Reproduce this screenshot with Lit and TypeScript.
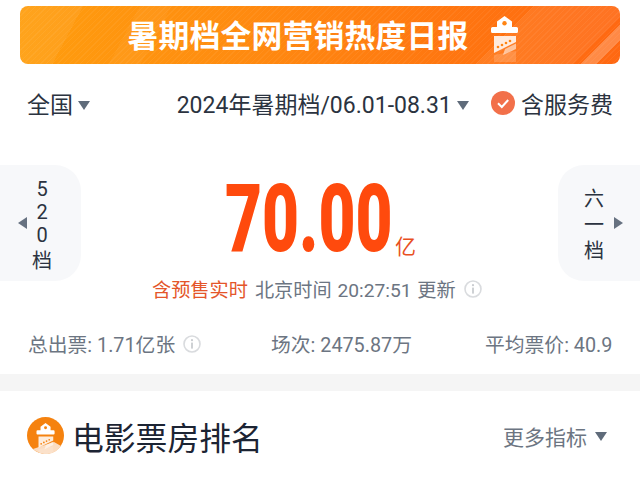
import { LitElement, html, css, svg } from "lit";
import { customElement } from "lit/decorators.js";

const info = html`<svg class="info" viewBox="0 0 18 18"><circle cx="9" cy="9" r="8" fill="none" stroke="#d9dbde" stroke-width="1.6"/><circle cx="9" cy="5.2" r="1.1" fill="#c9ccd0"/><rect x="8.1" y="7.6" width="1.8" height="6" fill="#c9ccd0"/></svg>`;

const tower = (hole: string) => svg`
  <path d="M13.5 0 L21 5.5 V11 H25.5 Q27 11 27 12.5 V15.5 Q27 17 25.5 17 H1.5 Q0 17 0 15.5 V12.5 Q0 11 1.5 11 H6 V5.5 Z" fill="#fff"/>
  <circle cx="13.5" cy="7.2" r="2.2" fill="${hole}"/>
  <path d="M3 20 H25 V26 L3 37 Z" fill="#fff" fill-opacity=".85"/>
  <path d="M14 33 L25 27.5 V33 L12 39 Z" fill="#fff" fill-opacity=".55"/>
  <path d="M3 39 L25 35 V46 H3 Z" fill="#fff" fill-opacity=".16"/>
  <g fill="${hole}"><circle cx="7" cy="31" r="1.3"/><circle cx="11" cy="29" r="1.3"/><circle cx="15" cy="27" r="1.3"/><circle cx="19" cy="25" r="1.3"/></g>`;

@customElement("app-root")
export class AppRoot extends LitElement {
  static styles = css`
    :host { display: block; width: 640px; height: 480px; overflow: hidden; background: #fff; font-family: Roboto, "Noto Sans CJK SC", sans-serif; color: #2b3340; }
    .wrap { padding-top: 6px; }
    .banner { margin: 0 20px; height: 58px; border-radius: 8px; display: flex; align-items: flex-start; justify-content: center; gap: 23px; padding-left: 6px; box-sizing: border-box; overflow: hidden;
      background:
        linear-gradient(135deg, transparent 0 94%, rgba(255,255,255,.22) 94% 96.5%, transparent 96.5%),
        linear-gradient(135deg, transparent 0 78%, rgba(255,255,255,.07) 78% 93%, transparent 93%),
        repeating-linear-gradient(135deg, transparent 0 3px, rgba(255,255,255,.05) 3px 4px),
        linear-gradient(118deg, rgba(255,255,255,.06) 0 10%, transparent 10% 19%, rgba(255,255,255,.04) 19% 24%, transparent 24%),
        linear-gradient(90deg, #ff9e0e 0%, #ff8c10 35%, #ff7710 70%, #ff6812 100%); }
    .banner-title { color: #fff; font-family: "Noto Sans CJK SC", sans-serif; font-size: 30.8px; font-weight: 700; letter-spacing: .2px; line-height: 56px; white-space: nowrap; }
    .banner-icon { width: 27px; height: 46px; margin-top: 10px; display: block; flex: none; }
    .filters { display: flex; align-items: center; height: 50px; margin-top: 14px; padding: 0 27px; font-size: 23px; white-space: nowrap; }
    .tri { width: 0; height: 0; border-left: 6px solid transparent; border-right: 6px solid transparent; border-top: 9px solid #5f6b7a; display: inline-block; margin-left: 5px; position: relative; top: -3px; }
    .region { width: 150px; }
    .period { width: 315px; }
    .fee { display: flex; align-items: center; gap: 6px; }
    .check { width: 24px; height: 24px; display: block; }
    .hero { display: grid; grid-template-columns: 81px 1fr 82px; margin-top: 37px; height: 116px; }
    .side { background: #f7f8fa; display: flex; align-items: center; font-size: 20px; line-height: 23px; }
    .side.left { border-radius: 0 26px 26px 0; padding-left: 18px; gap: 5px; }
    .side.right { border-radius: 26px 0 0 26px; padding-left: 26px; gap: 5px; }
    .stack { display: flex; flex-direction: column; align-items: center; width: 20px; color: #2b3340; padding-top: 4px; }
    .stack.wide { gap: 3px; }
    .gap { margin-top: 3px; }
    .arrow-l { width: 0; height: 0; border-top: 6px solid transparent; border-bottom: 6px solid transparent; border-right: 9px solid #667180; }
    .arrow-r { width: 0; height: 0; border-top: 6px solid transparent; border-bottom: 6px solid transparent; border-left: 9px solid #667180; margin-left: 5px; }
    .total { display: flex; align-items: flex-end; height: 116px; padding-left: 144px; }
    .num { display: block; width: 167px; height: 116px; font-family: Roboto, sans-serif; font-size: 94px; font-weight: 900; line-height: 108px; color: #ff4a0d; white-space: nowrap; transform-origin: 0 50%; transform: scaleX(.68); letter-spacing: 0; }
    .unit { font-size: 21px; line-height: 26px; color: #e8501f; margin-left: 3px; margin-bottom: 23px; font-family: "Noto Sans CJK SC", sans-serif; }
    .update { display: flex; align-items: center; height: 28px; margin-top: -6px; padding-left: 152px; font-size: 19.2px; color: #6c7582; white-space: nowrap; word-spacing: 1px; }
    .presale { color: #e4562a; margin-right: 7px; }
    .info { width: 18px; height: 18px; display: block; flex: none; }
    .update .info { margin-left: 8px; }
    .stats { display: grid; grid-template-columns: 243px 214px auto; align-items: center; height: 28px; margin-top: 26px; padding-left: 28px; font-size: 19.8px; color: #6c7582; white-space: nowrap; }
    .stat { display: flex; align-items: center; gap: 8px; }
    .band { height: 17px; background: #f5f5f5; margin-top: 17px; }
    .section { display: flex; align-items: flex-start; height: 38px; margin-top: 26px; padding: 0 33px 0 27px; }
    .logo { width: 37px; height: 37px; display: block; flex: none; }
    .section-title { font-size: 31.8px; line-height: 38px; padding-top: 3px; color: #1c2433; margin-left: 8px; flex: 1; white-space: nowrap; }
    .more { font-size: 21px; line-height: 38px; padding-top: 2px; color: #6c7582; white-space: nowrap; display: flex; align-items: center; }
    .more .tri { margin-left: 8px; top: -2px; }
  `;

  render() {
    return html`<div class="wrap">
      <div class="banner">
        <span class="banner-title">暑期档全网营销热度日报</span>
        <svg class="banner-icon" viewBox="0 0 27 46">${tower("#ff8412")}</svg>
      </div>
      <div class="filters">
        <span class="region">全国<i class="tri"></i></span>
        <span class="period">2024年暑期档/06.01-08.31<i class="tri"></i></span>
        <span class="fee">
          <svg class="check" viewBox="0 0 24 24"><circle cx="12" cy="12" r="12" fill="#f2704a"/><path d="M7 12.3 L10.8 16 L17.2 9" fill="none" stroke="#fff" stroke-width="2"/></svg>
          含服务费
        </span>
      </div>
      <div class="hero">
        <div class="side left"><i class="arrow-l"></i><div class="stack"><span>5</span><span>2</span><span>0</span><span class="gap">档</span></div></div>
        <div class="total"><span class="num">70.00</span><span class="unit">亿</span></div>
        <div class="side right"><div class="stack wide"><span>六</span><span>一</span><span>档</span></div><i class="arrow-r"></i></div>
      </div>
      <div class="update"><span class="presale">含预售实时</span><span>北京时间 20:27:51 更新</span>${info}</div>
      <div class="stats">
        <span class="stat">总出票: 1.71亿张 ${info}</span>
        <span class="stat">场次: 2475.87万</span>
        <span class="stat">平均票价: 40.9</span>
      </div>
      <div class="band"></div>
      <div class="section">
        <svg class="logo" viewBox="0 0 37 37">
          <circle cx="18.5" cy="18.5" r="18.5" fill="#f5820f"/>
          <path d="M6 32 L27 25 L34 29 A18.5 18.5 0 0 1 6 32 Z" fill="#fbdcc0"/>
          <g transform="translate(9.5 6) scale(.67)">${tower("#f5820f")}</g>
        </svg>
        <span class="section-title">电影票房排名</span>
        <span class="more">更多指标<i class="tri"></i></span>
      </div>
    </div>`;
  }
}
